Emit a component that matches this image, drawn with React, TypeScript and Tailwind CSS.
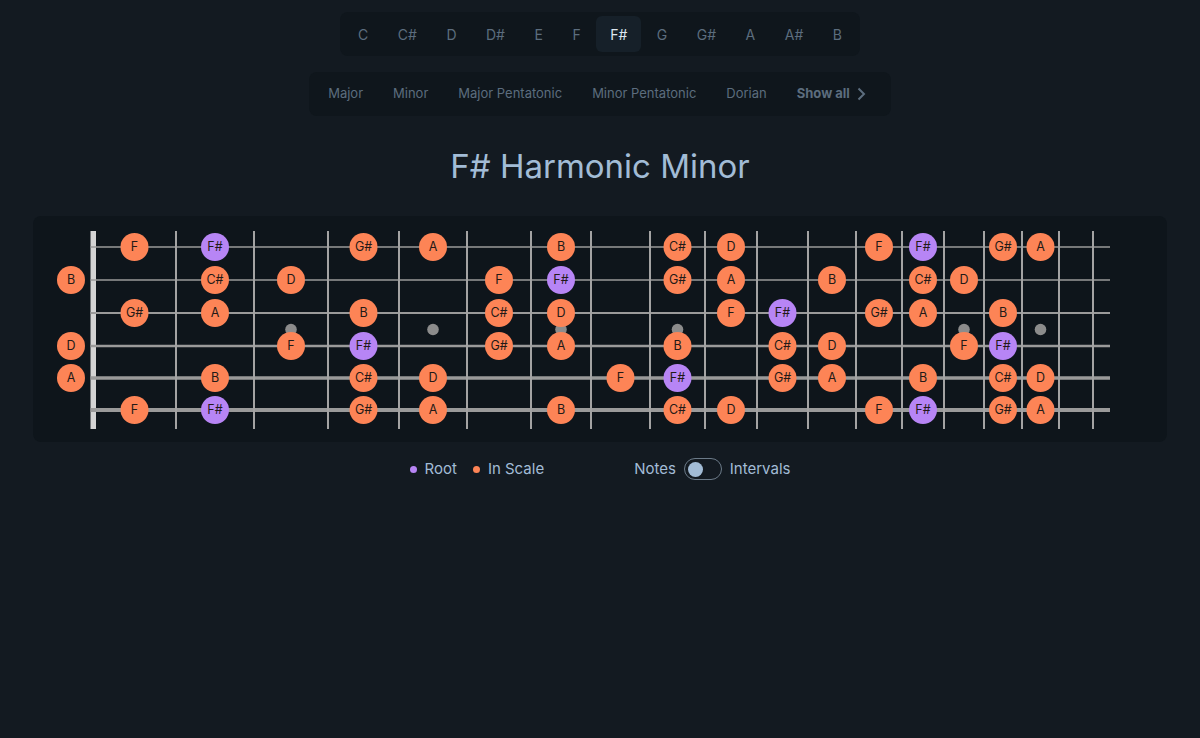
import React from "react";

const NOTE_NAMES = ["C", "C#", "D", "D#", "E", "F", "F#", "G", "G#", "A", "A#", "B"];
const SCALES = ["Major", "Minor", "Major Pentatonic", "Minor Pentatonic", "Dorian"];

// Coordinates relative to the panel (panel left = 32, top = 216 in page coords)
const OX = 32;
const OY = 216;
const NUT_X = 92;
const FRETS = [175, 253, 327, 398, 466, 530, 590, 649, 704, 756, 807, 855, 901, 943, 983, 1021, 1058, 1092];
const STRING_Y = [247, 280, 313, 346, 378, 410];
const STRING_W = [1.3, 1.7, 2, 2.4, 3.3, 4];
// open notes, top (high e) to bottom (low E): semitone index
const OPEN = [4, 11, 7, 2, 9, 4];
const SCALE = [6, 8, 9, 11, 1, 2, 5]; // F# harmonic minor
const ROOT = 6;
const INLAYS = [3, 5, 7, 9, 15, 17];

const ORANGE = "#fd8456";
const PURPLE = "#b785f5";

function noteX(fret: number): number {
  if (fret === 0) return 70;
  const left = fret === 1 ? NUT_X : FRETS[fret - 2];
  const right = FRETS[fret - 1];
  return (left + right) / 2;
}

function Fretboard() {
  const notes: { x: number; y: number; name: string; root: boolean }[] = [];
  STRING_Y.forEach((y, si) => {
    for (let f = 0; f <= 17; f++) {
      const n = (OPEN[si] + f) % 12;
      if (SCALE.includes(n)) {
        notes.push({ x: noteX(f), y, name: NOTE_NAMES[n], root: n === ROOT });
      }
    }
  });
  return (
    <svg width={1134} height={226} viewBox={`${OX} ${OY} 1134 226`} className="block">
      {/* nut */}
      <rect x={89.5} y={231} width={5.5} height={198} fill="#d4d4d4" />
      {/* strings */}
      {STRING_Y.map((y, i) => (
        <line key={`s${i}`} x1={89.5} x2={1109} y1={y} y2={y} stroke="#9a9a9a" strokeWidth={STRING_W[i]} />
      ))}
      {/* frets */}
      {FRETS.map((x, i) => (
        <line key={`f${i}`} x1={x} x2={x} y1={231} y2={429} stroke="#a3a3a3" strokeWidth={2} />
      ))}
      {/* inlays */}
      {INLAYS.map((f) => (
        <circle key={`i${f}`} cx={noteX(f)} cy={329.5} r={5.8} fill="#8c8c8c" />
      ))}
      {/* notes */}
      {notes.map((n, i) => (
        <g key={`n${i}`}>
          <circle cx={n.x} cy={n.y} r={14} fill={n.root ? PURPLE : ORANGE} />
          <text
            x={n.x}
            y={n.y + 0.5}
            textAnchor="middle"
            dominantBaseline="middle"
            fontFamily="Inter, 'Liberation Sans', sans-serif"
            fontSize={12.5}
            fill="#231a17"
          >
            {n.name}
          </text>
        </g>
      ))}
    </svg>
  );
}

export default function App() {
  return (
    <div
      className="min-h-[738px] w-full bg-[#131a21] flex flex-col items-center pt-3"
      style={{ fontFamily: "Inter, 'Liberation Sans', sans-serif" }}
    >
      {/* Note selector */}
      <div className="flex items-center gap-[1.5px] rounded-lg bg-[#0f161c] p-1 h-11">
        {NOTE_NAMES.map((n) => (
          <div
            key={n}
            className={
              n === "F#"
                ? "h-9 flex items-center px-[14px] rounded-md bg-[#162029] text-[14px] text-[#dde6ef]"
                : "h-9 flex items-center px-[14px] rounded-md text-[14px] text-[#5c6d7e]"
            }
          >
            {n}
          </div>
        ))}
      </div>

      {/* Scale selector */}
      <div className="mt-4 flex items-center rounded-lg bg-[#0f161c] p-1 h-11">
        {SCALES.map((s) => (
          <div key={s} className="h-9 flex items-center px-[15px] text-[13px] text-[#5c6d7e]">
            {s}
          </div>
        ))}
        <div className="h-9 flex items-center pl-[15px] pr-[21px] gap-[6px] text-[13px] font-bold text-[#5c6d7e]">
          Show all
          <svg width="10" height="14" viewBox="0 0 10 14">
            <path d="M2.5 1.5 L8 7 L2.5 12.5" fill="none" stroke="#5c6d7e" strokeWidth="2" />
          </svg>
        </div>
      </div>

      {/* Title */}
      <h1 className="mt-[30px] h-10 leading-10 text-[33px] text-[#a2bcd6] font-normal">F# Harmonic Minor</h1>

      {/* Fretboard panel */}
      <div className="mt-[30px] w-[1134px] h-[226px] rounded-lg bg-[#0e151b] overflow-hidden">
        <Fretboard />
      </div>

      {/* Legend */}
      <div className="mt-4 flex items-center gap-[90px] text-[15px] text-[#a2bcd6]">
        <div className="flex items-center gap-4">
          <div className="flex items-center gap-2">
            <span className="w-[7px] h-[7px] rounded-full bg-[#b785f5]" />
            <span>Root</span>
          </div>
          <div className="flex items-center gap-2">
            <span className="w-[7px] h-[7px] rounded-full bg-[#fd8456]" />
            <span>In Scale</span>
          </div>
        </div>
        <div className="flex items-center gap-2">
          <span>Notes</span>
          <div className="w-[38px] h-[22px] rounded-full border border-[#6b7a88] flex items-center px-[3px]">
            <span className="w-[15px] h-[15px] rounded-full bg-[#a2bcd6]" />
          </div>
          <span>Intervals</span>
        </div>
      </div>
    </div>
  );
}
